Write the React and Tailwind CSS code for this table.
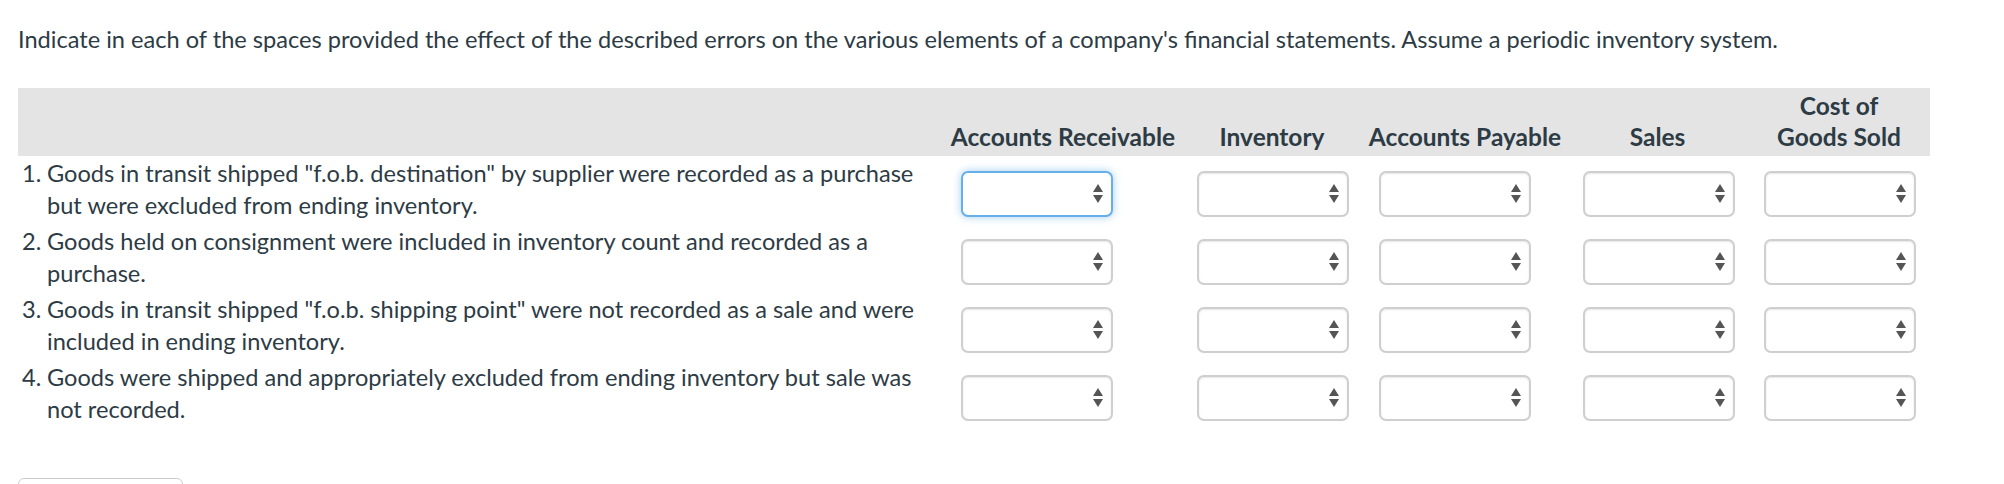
import React from 'react'

const columns = [
  { key: 'ar', label: ['Accounts Receivable'] },
  { key: 'inv', label: ['Inventory'] },
  { key: 'ap', label: ['Accounts Payable'] },
  { key: 'sales', label: ['Sales'] },
  { key: 'cogs', label: ['Cost of', 'Goods Sold'] },
]

const rows = [
  'Goods in transit shipped "f.o.b. destination" by supplier were recorded as a purchase but were excluded from ending inventory.',
  'Goods held on consignment were included in inventory count and recorded as a purchase.',
  'Goods in transit shipped "f.o.b. shipping point" were not recorded as a sale and were included in ending inventory.',
  'Goods were shipped and appropriately excluded from ending inventory but sale was not recorded.',
]

function Arrows() {
  return (
    <svg width="10" height="20" viewBox="0 0 10 20" className="shrink-0">
      <path d="M5 0 L10 8 L0 8 Z" fill="#555555" />
      <path d="M0 11 L10 11 L5 19 Z" fill="#555555" />
    </svg>
  )
}

function FakeSelect({ focused }) {
  return (
    <div
      className={`w-[152px] h-[46px] rounded-[7px] bg-white flex items-center justify-end pr-[8px] ${
        focused
          ? 'border-2 border-[#66afe9] shadow-[0_0_8px_rgba(102,175,233,0.6)]'
          : 'border-2 border-[#cfcfcf] shadow-[inset_0_1px_2px_rgba(0,0,0,0.1)]'
      }`}
    >
      <Arrows />
    </div>
  )
}

export default function App() {
  return (
    <div className="w-[2004px] h-[484px] overflow-hidden bg-white pl-[18px] font-['Lato',_'Open_Sans',_sans-serif] text-[#2d3b45]">
      <p className="pt-[23px] text-[23.6px] leading-[32px]">
        Indicate in each of the spaces provided the effect of the described errors on the various elements of a company's financial statements. Assume a periodic inventory system.
      </p>

      {/* Error table */}
      <div className="mt-[33px] grid grid-cols-[927px_236px_182px_204px_181px_182px]">
        <div className="h-[68px] bg-[#e4e4e4]" />
        {columns.map((col) => (
          <div
            key={col.key}
            className="h-[68px] bg-[#e4e4e4] flex flex-col items-center justify-end pb-[4px] text-[24.5px] leading-[31px] font-bold"
          >
            {col.label.map((line) => (
              <span key={line} className="whitespace-nowrap">{line}</span>
            ))}
          </div>
        ))}

        {rows.map((text, i) => (
          <React.Fragment key={i}>
            <div className="h-[68px] pt-[1px] pl-[4px] pr-[8px] flex text-[23.6px] leading-[32px]">
              <span className="w-[25px] shrink-0">{i + 1}.</span>
              <span>{text}</span>
            </div>
            {columns.map((col, j) => (
              <div key={col.key} className="h-[68px] pt-[15px] pl-[16px]">
                <FakeSelect focused={i === 0 && j === 0} />
              </div>
            ))}
          </React.Fragment>
        ))}
      </div>

      <div className="mt-[50px] w-[165px] h-[40px] border border-[#cccccc] rounded-[6px]" />
    </div>
  )
}
